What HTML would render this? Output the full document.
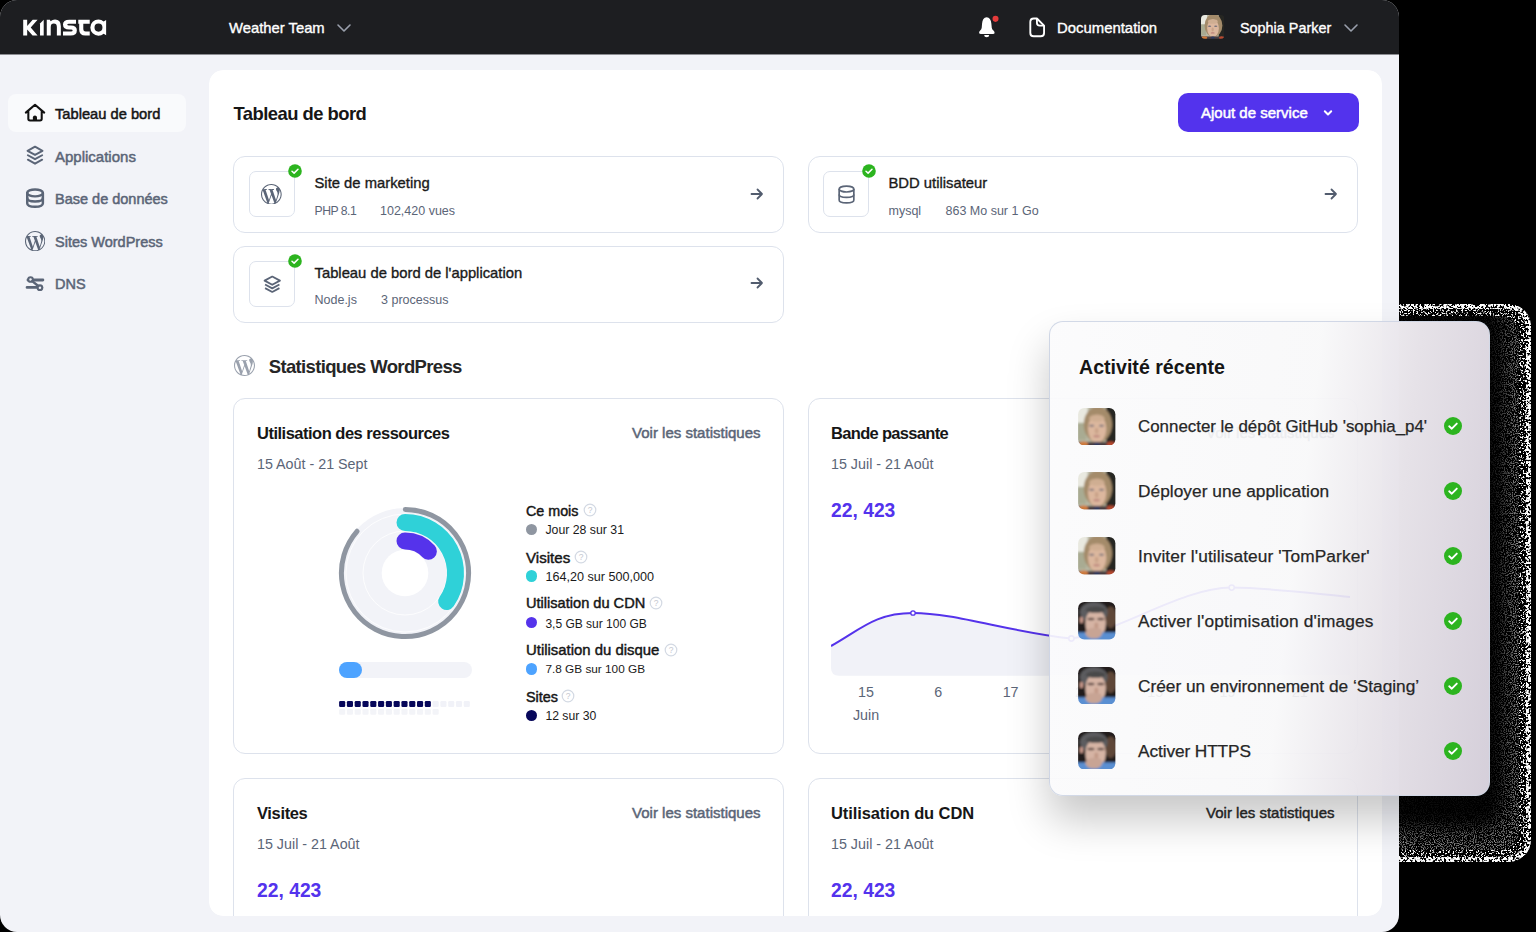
<!DOCTYPE html>
<html><head><meta charset="utf-8">
<style>
*{box-sizing:border-box;margin:0;padding:0}
html,body{width:1536px;height:932px;overflow:hidden;background:#000;font-family:"Liberation Sans",sans-serif}
.abs{position:absolute}
.t{position:absolute;line-height:1;white-space:nowrap}
.sb{-webkit-text-stroke:0.35px currentColor}
.frame{position:absolute;left:0;top:0;width:1399px;height:932px;border-radius:17px;background:#f2f3f8;overflow:hidden}
.header{position:absolute;left:0;top:0;width:1399px;height:54px;background:#1d1e21}
.panel{position:absolute;left:209px;top:70px;width:1173px;height:846px;background:#fff;border-radius:14px;overflow:hidden}
.card{position:absolute;border:1px solid #dde2ec;border-radius:12px;background:#fff}
.ibox{position:absolute;width:46px;height:46px;border:1px solid #dde2ec;border-radius:7px;background:#fff}
.badge{position:absolute;width:14px;height:14px;border-radius:50%;background:#2cb41f}
.nav{color:#5b6577}
</style></head>
<body>
<svg width="0" height="0" style="position:absolute">
<defs>
<filter id="bl" x="-10%" y="-10%" width="120%" height="120%"><feGaussianBlur stdDeviation="18"/></filter>
<clipPath id="avc"><rect x="85" y="100" width="725" height="730" rx="120"/></clipPath>
<symbol id="sophia" viewBox="85 100 725 730">
<g clip-path="url(#avc)"><g filter="url(#bl)">
<rect x="40" y="60" width="820" height="800" fill="#b9b8a4"/>
<rect x="40" y="60" width="230" height="330" fill="#e9e9e0"/>
<rect x="40" y="390" width="200" height="330" fill="#a9ab92"/>
<rect x="630" y="60" width="230" height="800" fill="#262622"/>
<ellipse cx="470" cy="420" rx="275" ry="350" fill="#a48b6a"/>
<ellipse cx="455" cy="505" rx="180" ry="275" fill="#dcb79e"/>
<ellipse cx="450" cy="300" rx="150" ry="70" fill="#cfae92"/>
<ellipse cx="350" cy="445" rx="50" ry="20" fill="#76707a"/>
<ellipse cx="540" cy="445" rx="50" ry="20" fill="#76707a"/>
<ellipse cx="445" cy="545" rx="35" ry="60" fill="#c9a288"/>
<ellipse cx="445" cy="650" rx="65" ry="20" fill="#b98078"/>
<rect x="40" y="760" width="820" height="100" fill="#4a3c40"/>
<ellipse cx="190" cy="800" rx="90" ry="50" fill="#d07a3a"/>
<ellipse cx="720" cy="800" rx="80" ry="50" fill="#b8482e"/>
<ellipse cx="450" cy="800" rx="60" ry="40" fill="#2d3a60"/>
</g></g>
</symbol>
<symbol id="man" viewBox="85 100 725 730">
<g clip-path="url(#avc)"><g filter="url(#bl)">
<rect x="40" y="60" width="820" height="800" fill="#211e1c"/>
<ellipse cx="720" cy="400" rx="110" ry="210" fill="#5e4638"/>
<ellipse cx="390" cy="300" rx="270" ry="200" fill="#5c5c5e"/>
<ellipse cx="425" cy="520" rx="200" ry="285" fill="#d6b4a4"/>
<ellipse cx="150" cy="450" rx="35" ry="65" fill="#c8988a"/>
<ellipse cx="425" cy="250" rx="190" ry="60" fill="#48484a"/>
<ellipse cx="335" cy="430" rx="70" ry="25" fill="#5e4a44"/>
<ellipse cx="525" cy="430" rx="70" ry="25" fill="#5e4a44"/>
<ellipse cx="440" cy="560" rx="40" ry="60" fill="#c29a88"/>
<ellipse cx="440" cy="645" rx="85" ry="25" fill="#9e7268"/>
<rect x="40" y="690" width="820" height="170" fill="#5a8fd2"/>
<ellipse cx="390" cy="705" rx="165" ry="105" fill="#c8a494"/>
</g></g>
</symbol>
</defs></svg>
<svg class="abs" style="left:1380px;top:290px" width="156" height="590" viewBox="1380 290 156 590">
<defs>
<filter id="nz1" x="1380" y="290" width="156" height="590" filterUnits="userSpaceOnUse">
<feTurbulence type="fractalNoise" baseFrequency="0.45" numOctaves="2" seed="3" result="t"/>
<feColorMatrix in="t" type="matrix" values="0 0 0 1 0  0 0 0 1 0  0 0 0 1 0  0 0 0 0 1"/>
<feComponentTransfer><feFuncR type="linear" slope="10" intercept="-4.3"/><feFuncG type="linear" slope="10" intercept="-4.3"/><feFuncB type="linear" slope="10" intercept="-4.3"/></feComponentTransfer>
</filter>
<filter id="nz1b" x="1380" y="290" width="156" height="590" filterUnits="userSpaceOnUse">
<feTurbulence type="fractalNoise" baseFrequency="0.6" numOctaves="2" seed="5" result="t"/>
<feColorMatrix in="t" type="matrix" values="0 0 0 1 0  0 0 0 1 0  0 0 0 1 0  0 0 0 0 1"/>
<feComponentTransfer><feFuncR type="linear" slope="8" intercept="-4.4"/><feFuncG type="linear" slope="8" intercept="-4.4"/><feFuncB type="linear" slope="8" intercept="-4.4"/></feComponentTransfer>
</filter>
<filter id="nz2" x="1380" y="290" width="156" height="590" filterUnits="userSpaceOnUse">
<feTurbulence type="fractalNoise" baseFrequency="0.9" numOctaves="2" seed="7" result="t"/>
<feColorMatrix in="t" type="matrix" values="0 0 0 1 0  0 0 0 1 0  0 0 0 1 0  0 0 0 0 1"/>
<feComponentTransfer><feFuncR type="linear" slope="1.1" intercept="-0.55"/><feFuncG type="linear" slope="1.1" intercept="-0.55"/><feFuncB type="linear" slope="1.1" intercept="-0.55"/></feComponentTransfer>
</filter>
<filter id="bl12" x="1200" y="200" width="400" height="700" filterUnits="userSpaceOnUse"><feGaussianBlur stdDeviation="9"/></filter>
<clipPath id="ring1"><path clip-rule="evenodd" d="M1300,304H1509.0A22.0,22.0 0 0,1 1531,326.0V840.0A22.0,22.0 0 0,1 1509.0,862H1300Z M1300,309H1505.5A20.5,20.5 0 0,1 1526,329.5V836.5A20.5,20.5 0 0,1 1505.5,857H1300Z"/></clipPath>
<clipPath id="ring2"><path clip-rule="evenodd" d="M1300,309H1505.5A20.5,20.5 0 0,1 1526,329.5V836.5A20.5,20.5 0 0,1 1505.5,857H1300Z M1300,316H1500.6A18.4,18.4 0 0,1 1519,334.4V831.6A18.4,18.4 0 0,1 1500.6,850H1300Z"/></clipPath>
<clipPath id="inner"><path d="M1300,316H1500.6A18.4,18.4 0 0,1 1519,334.4V831.6A18.4,18.4 0 0,1 1500.6,850H1300Z"/></clipPath>
</defs>
<rect x="1380" y="290" width="156" height="590" fill="#000"/>
<g clip-path="url(#ring1)"><rect x="1380" y="290" width="156" height="590" filter="url(#nz1)"/></g>
<g clip-path="url(#ring2)"><rect x="1380" y="290" width="156" height="590" filter="url(#nz1b)"/></g>
<g clip-path="url(#inner)"><rect x="1380" y="290" width="156" height="590" filter="url(#nz2)"/>
<rect x="1300" y="300" width="205" height="530" rx="24" fill="#000" opacity="0.9" filter="url(#bl12)"/>
</g>
</svg>
<div class="frame">
  <div class="abs" style="left:0;top:54px;width:1399px;height:1px;background:#8c8d92"></div>
  <div class="header">
    <svg class="abs" style="left:18px;top:12px" width="94" height="30" viewBox="0 0 1536 490">
      <g fill="#fff">
        <path d="M85,125H150V228L240,125H320L208,255L320,385H238L150,285V385H85Z"/>
        <path d="M360,188L420,125V385H360Z"/>
        <path d="M470,385V128H522L532,150Q562,122 605,122Q700,122 700,232V385H635V245Q635,188 585,188Q535,188 535,245V385Z"/>
        <path d="M948,125H838Q735,125 735,205Q735,287 838,287H868Q893,287 893,303Q893,320 868,320H735V385H862Q962,385 962,300Q962,222 862,222H832Q805,222 805,205Q805,190 832,190H948Z"/>
        <path d="M985,125H1172V192H1067V282Q1067,320 1105,320H1172V385H1100Q1000,385 1000,290V192H985Z"/>
        <path fill-rule="evenodd" d="M1315,122A132,132 0 1,0 1315,388A132,132 0 0,0 1400,355L1440,380V130L1400,155A132,132 0 0,0 1315,122ZM1315,188A65,67 0 1,1 1315,322A65,67 0 1,1 1315,188Z"/>
      </g>
    </svg>

    <div class="t sb" style="left:229px;top:21px;font-size:14.8px;color:#fff">Weather Team</div>
    <svg class="abs" style="left:336px;top:22px" width="16" height="12" viewBox="0 0 16 12"><path d="M2,3L8,9L14,3" fill="none" stroke="#9aa0ac" stroke-width="1.6" stroke-linecap="round" stroke-linejoin="round"/></svg>
    <svg class="abs" style="left:970px;top:10px" width="80" height="35" viewBox="0 0 1536 672">
      <path fill="#fff" d="M320,140Q240,150 232,260L225,340Q222,370 195,395Q170,420 175,440Q180,460 210,460H440Q470,460 472,440Q475,420 450,395Q420,370 418,340L410,260Q400,150 320,140Z"/>
      <path fill="#fff" d="M272,480H368Q368,525 320,525Q272,525 272,480Z"/>
      <circle cx="490" cy="170" r="58" fill="#e63b3b"/>
      <path fill="none" stroke="#fff" stroke-width="36" stroke-linejoin="round" d="M1225,163H1285L1422,300V440Q1422,505 1357,505H1222Q1158,505 1158,440V230Q1158,163 1225,163Z"/>
      <path fill="none" stroke="#fff" stroke-width="36" stroke-linejoin="round" d="M1285,163V245Q1285,300 1340,300H1422"/>
    </svg>
    <div class="t sb" style="left:1057px;top:21px;font-size:14.9px;color:#fff">Documentation</div>
    <svg class="abs" style="left:1200.5px;top:15.2px" width="23.5" height="23.8"><use href="#sophia"/></svg>
    <div class="t sb" style="left:1240px;top:21px;font-size:14.4px;color:#fff">Sophia Parker</div>
    <svg class="abs" style="left:1343px;top:22px" width="16" height="12" viewBox="0 0 16 12"><path d="M2,3L8,9L14,3" fill="none" stroke="#9aa0ac" stroke-width="1.6" stroke-linecap="round" stroke-linejoin="round"/></svg>
  </div>

  <div class="abs" style="left:8px;top:94px;width:178px;height:38px;border-radius:8px;background:#f9fafc"></div>
  <svg class="abs" style="left:20px;top:95px" width="40" height="80" viewBox="0 0 466 932">
    <path fill="none" stroke="#111" stroke-width="24" stroke-linejoin="round" stroke-linecap="round" d="M68,205L175,114L282,205M97,183V278Q97,298 117,298H233Q253,298 253,278V183"/>
    <path fill="#111" d="M150,298V262Q150,238 174,238Q198,238 198,262V298Z"/>
    <g fill="none" stroke="#5b6577" stroke-width="23" stroke-linejoin="round" stroke-linecap="round">
      <path d="M175,602L262,650L175,698L88,650Z"/>
      <path d="M92,702L175,748L258,702"/>
      <path d="M92,754L175,800L258,754"/>
    </g>
  </svg>
  <svg class="abs" style="left:20px;top:180px" width="40" height="120" viewBox="0 0 311 932">
    <g fill="none" stroke="#5b6577" stroke-width="19" stroke-linecap="round">
      <ellipse cx="117" cy="100" rx="61" ry="27"/>
      <path d="M56,100V180Q56,208 117,208Q178,208 178,180V100"/>
      <path d="M56,140Q56,167 117,167Q178,167 178,140"/>
      <path d="M62,777H178M55,835H170" stroke-width="22"/>
      <circle cx="82" cy="773" r="18" stroke-width="16" fill="#f2f3f8"/>
      <circle cx="155" cy="837" r="18" stroke-width="16" fill="#f2f3f8"/>
      <path d="M95,786L142,824" stroke-width="19"/>
    </g>
  </svg>
<svg class="abs" style="left:25px;top:230.5px" width="20.3" height="20.3" viewBox="0 0 24 24"><path fill="#5b6577" d="M21.469 6.825c.84 1.537 1.318 3.3 1.318 5.175 0 3.979-2.156 7.456-5.363 9.325l3.295-9.527c.615-1.54.82-2.771.82-3.864 0-.405-.026-.78-.07-1.11m-7.981.105c.647-.03 1.232-.105 1.232-.105.582-.075.514-.93-.067-.899 0 0-1.755.135-2.88.135-1.064 0-2.85-.15-2.85-.15-.585-.03-.661.855-.075.885 0 0 .54.061 1.125.09l1.68 4.605-2.37 7.08L5.354 6.9c.649-.03 1.234-.1 1.234-.1.585-.075.516-.93-.065-.896 0 0-1.746.138-2.874.138-.2 0-.438-.008-.69-.015C4.911 3.15 8.235 1.215 12 1.215c2.809 0 5.365 1.072 7.286 2.833-.046-.003-.091-.009-.141-.009-1.06 0-1.812.923-1.812 1.914 0 .89.513 1.643 1.06 2.531.411.72.89 1.643.89 2.977 0 .915-.354 1.994-.821 3.479l-1.075 3.585-3.9-11.61.001.014zM12 22.784c-1.059 0-2.081-.153-3.048-.437l3.237-9.406 3.315 9.087c.024.053.05.101.078.149-1.12.393-2.325.609-3.582.609M1.211 12c0-1.564.336-3.05.935-4.39L7.29 21.709C3.694 19.96 1.212 16.271 1.211 12M12 0C5.385 0 0 5.385 0 12s5.385 12 12 12 12-5.385 12-12S18.615 0 12 0"/></svg>
<div class="t sb" style="-webkit-text-stroke:0.5px currentColor;left:55px;top:106.5px;font-size:14.7px;color:#161616">Tableau de bord</div>
  <div class="t sb nav" style="-webkit-text-stroke:0.5px currentColor;left:55px;top:149px;font-size:15px">Applications</div>
  <div class="t sb nav" style="-webkit-text-stroke:0.5px currentColor;left:55px;top:192px;font-size:14.5px">Base de données</div>
  <div class="t sb nav" style="-webkit-text-stroke:0.5px currentColor;left:55px;top:234.5px;font-size:14.5px">Sites WordPress</div>
  <div class="t sb nav" style="-webkit-text-stroke:0.5px currentColor;left:55px;top:277px;font-size:14.5px">DNS</div>
<div class="pc" style="position:absolute;left:0;top:0;width:1399px;height:932px;clip-path:inset(70px 17px 16px 209px round 14px)">
<div class="panel"></div>
<div class="t" style="left:233.5px;top:104.72px;font-size:18.4px;color:#161616;font-weight:bold;letter-spacing:-0.53px">Tableau de bord</div>
<div class="abs" style="left:1177.5px;top:93.3px;width:181.5px;height:38.7px;border-radius:10px;background:#5333ed"></div>
<div class="t sb" style="left:1201px;top:104.80px;font-size:15px;color:#fff;-webkit-text-stroke:0.5px #fff">Ajout de service</div>
<svg class="abs" style="left:1321.5px;top:107px" width="12" height="12" viewBox="0 0 12 12"><path d="M2.8,4.3L6,7.5L9.2,4.3" fill="none" stroke="#fff" stroke-width="2" stroke-linecap="round" stroke-linejoin="round"/></svg>
<div class="card" style="left:233px;top:156px;width:551px;height:77px"></div>
<div class="ibox" style="left:248.5px;top:171px"></div>
<svg class="abs" style="left:261.3px;top:183.8px" width="20.7" height="20.7" viewBox="0 0 24 24"><path fill="#5b6577" d="M21.469 6.825c.84 1.537 1.318 3.3 1.318 5.175 0 3.979-2.156 7.456-5.363 9.325l3.295-9.527c.615-1.54.82-2.771.82-3.864 0-.405-.026-.78-.07-1.11m-7.981.105c.647-.03 1.232-.105 1.232-.105.582-.075.514-.93-.067-.899 0 0-1.755.135-2.88.135-1.064 0-2.85-.15-2.85-.15-.585-.03-.661.855-.075.885 0 0 .54.061 1.125.09l1.68 4.605-2.37 7.08L5.354 6.9c.649-.03 1.234-.1 1.234-.1.585-.075.516-.93-.065-.896 0 0-1.746.138-2.874.138-.2 0-.438-.008-.69-.015C4.911 3.15 8.235 1.215 12 1.215c2.809 0 5.365 1.072 7.286 2.833-.046-.003-.091-.009-.141-.009-1.06 0-1.812.923-1.812 1.914 0 .89.513 1.643 1.06 2.531.411.72.89 1.643.89 2.977 0 .915-.354 1.994-.821 3.479l-1.075 3.585-3.9-11.61.001.014zM12 22.784c-1.059 0-2.081-.153-3.048-.437l3.237-9.406 3.315 9.087c.024.053.05.101.078.149-1.12.393-2.325.609-3.582.609M1.211 12c0-1.564.336-3.05.935-4.39L7.29 21.709C3.694 19.96 1.212 16.271 1.211 12M12 0C5.385 0 0 5.385 0 12s5.385 12 12 12 12-5.385 12-12S18.615 0 12 0"/></svg>
<svg class="abs" style="left:288px;top:164px" width="14" height="14" viewBox="0 0 14 14"><circle cx="7" cy="7" r="6.8" fill="#2cb41f"/><path d="M4,7.2L6.1,9.1L10,5.2" fill="none" stroke="#fff" stroke-width="1.5" stroke-linecap="round" stroke-linejoin="round"/></svg>
<div class="t sb" style="left:314.5px;top:176.07px;font-size:14.8px;color:#1a1a1a;">Site de marketing</div>
<div class="t" style="left:314.5px;top:204.62px;font-size:12.2px;color:#5b6577;letter-spacing:-0.5px">PHP 8.1</div>
<div class="t" style="left:380px;top:204.62px;font-size:12.5px;color:#5b6577;">102,420 vues</div>
<svg class="abs" style="left:750.2px;top:186.8px" width="14" height="14" viewBox="0 0 14 14"><path d="M1.5,7H12M7.5,2.5L12,7L7.5,11.5" fill="none" stroke="#525c6e" stroke-width="1.8" stroke-linecap="round" stroke-linejoin="round"/></svg>
<div class="card" style="left:808px;top:156px;width:550px;height:77px"></div>
<div class="ibox" style="left:823px;top:171px"></div>
<svg class="abs" style="left:835.5px;top:184px" width="21" height="21" viewBox="0 0 20 20"><g fill="none" stroke="#5b6577" stroke-width="1.6"><ellipse cx="10" cy="4.8" rx="7" ry="2.8"/><path d="M3,4.8V15.2Q3,18 10,18Q17,18 17,15.2V4.8"/><path d="M3,10Q3,12.8 10,12.8Q17,12.8 17,10"/></g></svg>
<svg class="abs" style="left:862px;top:164px" width="14" height="14" viewBox="0 0 14 14"><circle cx="7" cy="7" r="6.8" fill="#2cb41f"/><path d="M4,7.2L6.1,9.1L10,5.2" fill="none" stroke="#fff" stroke-width="1.5" stroke-linecap="round" stroke-linejoin="round"/></svg>
<div class="t sb" style="left:888.5px;top:176.07px;font-size:14.8px;color:#1a1a1a;">BDD utilisateur</div>
<div class="t" style="left:888.5px;top:204.62px;font-size:12.5px;color:#5b6577;">mysql</div>
<div class="t" style="left:945.5px;top:204.62px;font-size:12.5px;color:#5b6577;">863 Mo sur 1 Go</div>
<svg class="abs" style="left:1324.2px;top:186.8px" width="14" height="14" viewBox="0 0 14 14"><path d="M1.5,7H12M7.5,2.5L12,7L7.5,11.5" fill="none" stroke="#525c6e" stroke-width="1.8" stroke-linecap="round" stroke-linejoin="round"/></svg>
<div class="card" style="left:233px;top:245.5px;width:551px;height:77px"></div>
<div class="ibox" style="left:248.5px;top:260.5px"></div>
<svg class="abs" style="left:261.5px;top:273.5px" width="20.5" height="20.5" viewBox="0 0 20 20"><g fill="none" stroke="#5b6577" stroke-width="1.75" stroke-linejoin="round"><path d="M10,2.5L17.5,6.5L10,10.5L2.5,6.5Z"/><path d="M3,10.3L10,14L17,10.3"/><path d="M3,13.8L10,17.5L17,13.8"/></g></svg>
<svg class="abs" style="left:288px;top:253.5px" width="14" height="14" viewBox="0 0 14 14"><circle cx="7" cy="7" r="6.8" fill="#2cb41f"/><path d="M4,7.2L6.1,9.1L10,5.2" fill="none" stroke="#fff" stroke-width="1.5" stroke-linecap="round" stroke-linejoin="round"/></svg>
<div class="t sb" style="left:314.5px;top:265.57px;font-size:14.8px;color:#1a1a1a;">Tableau de bord de l'application</div>
<div class="t" style="left:314.5px;top:294.12px;font-size:12.5px;color:#5b6577;">Node.js</div>
<div class="t" style="left:381px;top:294.12px;font-size:12.5px;color:#5b6577;">3 processus</div>
<svg class="abs" style="left:750.2px;top:276.3px" width="14" height="14" viewBox="0 0 14 14"><path d="M1.5,7H12M7.5,2.5L12,7L7.5,11.5" fill="none" stroke="#525c6e" stroke-width="1.8" stroke-linecap="round" stroke-linejoin="round"/></svg>
<svg class="abs" style="left:234.2px;top:355.2px" width="21" height="21" viewBox="0 0 24 24"><path fill="#9aa1ad" d="M21.469 6.825c.84 1.537 1.318 3.3 1.318 5.175 0 3.979-2.156 7.456-5.363 9.325l3.295-9.527c.615-1.54.82-2.771.82-3.864 0-.405-.026-.78-.07-1.11m-7.981.105c.647-.03 1.232-.105 1.232-.105.582-.075.514-.93-.067-.899 0 0-1.755.135-2.88.135-1.064 0-2.85-.15-2.85-.15-.585-.03-.661.855-.075.885 0 0 .54.061 1.125.09l1.68 4.605-2.37 7.08L5.354 6.9c.649-.03 1.234-.1 1.234-.1.585-.075.516-.93-.065-.896 0 0-1.746.138-2.874.138-.2 0-.438-.008-.69-.015C4.911 3.15 8.235 1.215 12 1.215c2.809 0 5.365 1.072 7.286 2.833-.046-.003-.091-.009-.141-.009-1.06 0-1.812.923-1.812 1.914 0 .89.513 1.643 1.06 2.531.411.72.89 1.643.89 2.977 0 .915-.354 1.994-.821 3.479l-1.075 3.585-3.9-11.61.001.014zM12 22.784c-1.059 0-2.081-.153-3.048-.437l3.237-9.406 3.315 9.087c.024.053.05.101.078.149-1.12.393-2.325.609-3.582.609M1.211 12c0-1.564.336-3.05.935-4.39L7.29 21.709C3.694 19.96 1.212 16.271 1.211 12M12 0C5.385 0 0 5.385 0 12s5.385 12 12 12 12-5.385 12-12S18.615 0 12 0"/></svg>
<div class="t" style="left:268.7px;top:358.14px;font-size:18.5px;color:#262626;font-weight:bold;letter-spacing:-0.65px">Statistiques WordPress</div>
<div class="card" style="left:233px;top:397.5px;width:551px;height:356px"></div>
<div class="t" style="left:257px;top:425.03px;font-size:16.5px;color:#161616;font-weight:bold;letter-spacing:-0.5px">Utilisation des ressources</div>
<div class="t sb" style="-webkit-text-stroke:0.5px currentColor;right:638.5px;top:425.30px;font-size:15px;color:#5b6577">Voir les statistiques</div>
<div class="t" style="left:257px;top:457.10px;font-size:14.3px;color:#5b6577;">15 Août - 21 Sept</div>
<div class="card" style="left:808px;top:397.5px;width:550px;height:356px"></div>
<div class="t" style="left:831px;top:424.53px;font-size:16.5px;color:#161616;font-weight:bold;letter-spacing:-0.68px">Bande passante</div>
<div class="t sb" style="-webkit-text-stroke:0.5px currentColor;right:64.5px;top:424.80px;font-size:15px;color:#5b6577">Voir les statistiques</div>
<div class="t" style="left:831px;top:456.60px;font-size:14.3px;color:#5b6577;">15 Juil - 21 Août</div>
<div class="t" style="left:831px;top:500.66px;font-size:19.3px;color:#5333ed;font-weight:bold">22, 423</div>
<div class="card" style="left:233px;top:777.5px;width:551px;height:300px"></div>
<div class="t" style="left:257px;top:804.53px;font-size:16.5px;color:#161616;font-weight:bold;letter-spacing:-0.35px">Visites</div>
<div class="t sb" style="-webkit-text-stroke:0.5px currentColor;right:638.5px;top:804.80px;font-size:15px;color:#5b6577">Voir les statistiques</div>
<div class="t" style="left:257px;top:836.60px;font-size:14.3px;color:#5b6577;">15 Juil - 21 Août</div>
<div class="t" style="left:257px;top:880.66px;font-size:19.3px;color:#5333ed;font-weight:bold">22, 423</div>
<div class="card" style="left:808px;top:777.5px;width:550px;height:300px"></div>
<div class="t" style="left:831px;top:804.53px;font-size:16.5px;color:#161616;font-weight:bold;letter-spacing:-0.1px">Utilisation du CDN</div>
<div class="t sb" style="right:64.5px;top:804.80px;font-size:15px;color:#2a2a2a;-webkit-text-stroke:0.45px #2a2a2a">Voir les statistiques</div>
<div class="t" style="left:831px;top:836.60px;font-size:14.3px;color:#5b6577;">15 Juil - 21 Août</div>
<div class="t" style="left:831px;top:880.66px;font-size:19.3px;color:#5333ed;font-weight:bold">22, 423</div>
<svg class="abs" style="left:335.4px;top:502.7px" width="140" height="140" viewBox="0 0 140 140">
<circle cx="70" cy="70" r="65" fill="#f2f3f8"/>
<circle cx="70" cy="70" r="59" fill="none" stroke="#fff" stroke-width="0.8"/>
<circle cx="70" cy="70" r="42" fill="none" stroke="#fff" stroke-width="0.8"/>
<circle cx="70" cy="70" r="23.3" fill="#fff"/>
<path d="M70.33,6.40A63.6,63.6 0 1,1 22.00,28.27" fill="none" stroke="#8f96a1" stroke-width="5" stroke-linecap="round"/>
<path d="M70.00,19.50A50.5,50.5 0 0,1 111.67,98.53" fill="none" stroke="#2fd1d8" stroke-width="17" stroke-linecap="round"/>
<path d="M70.00,38.00A32,32 0 0,1 93.40,48.18" fill="none" stroke="#5533eb" stroke-width="17" stroke-linecap="round"/>
</svg>
<div class="abs" style="left:339.1px;top:662.1px;width:132.6px;height:15.7px;border-radius:8px;background:#f2f3f8"></div>
<div class="abs" style="left:339.1px;top:662.1px;width:22.8px;height:15.7px;border-radius:8px;background:#4da3ff"></div>
<svg class="abs" style="left:339px;top:700px" width="135" height="16" viewBox="0 0 135 16"><rect x="0.10" y="1" width="6.1" height="6" rx="1.2" fill="#07075a"/><rect x="7.89" y="1" width="6.1" height="6" rx="1.2" fill="#07075a"/><rect x="15.68" y="1" width="6.1" height="6" rx="1.2" fill="#07075a"/><rect x="23.47" y="1" width="6.1" height="6" rx="1.2" fill="#07075a"/><rect x="31.26" y="1" width="6.1" height="6" rx="1.2" fill="#07075a"/><rect x="39.05" y="1" width="6.1" height="6" rx="1.2" fill="#07075a"/><rect x="46.84" y="1" width="6.1" height="6" rx="1.2" fill="#07075a"/><rect x="54.63" y="1" width="6.1" height="6" rx="1.2" fill="#07075a"/><rect x="62.42" y="1" width="6.1" height="6" rx="1.2" fill="#07075a"/><rect x="70.21" y="1" width="6.1" height="6" rx="1.2" fill="#07075a"/><rect x="78.00" y="1" width="6.1" height="6" rx="1.2" fill="#07075a"/><rect x="85.79" y="1" width="6.1" height="6" rx="1.2" fill="#07075a"/><rect x="93.58" y="1" width="6.1" height="6" rx="1.2" fill="#f1f2f8"/><rect x="101.37" y="1" width="6.1" height="6" rx="1.2" fill="#f1f2f8"/><rect x="109.16" y="1" width="6.1" height="6" rx="1.2" fill="#f1f2f8"/><rect x="116.95" y="1" width="6.1" height="6" rx="1.2" fill="#f1f2f8"/><rect x="124.74" y="1" width="6.1" height="6" rx="1.2" fill="#f1f2f8"/><rect x="0.10" y="9" width="6.1" height="5.7" rx="1.2" fill="#f3f4f8"/><rect x="7.89" y="9" width="6.1" height="5.7" rx="1.2" fill="#f3f4f8"/><rect x="15.68" y="9" width="6.1" height="5.7" rx="1.2" fill="#f3f4f8"/><rect x="23.47" y="9" width="6.1" height="5.7" rx="1.2" fill="#f3f4f8"/><rect x="31.26" y="9" width="6.1" height="5.7" rx="1.2" fill="#f3f4f8"/><rect x="39.05" y="9" width="6.1" height="5.7" rx="1.2" fill="#f3f4f8"/><rect x="46.84" y="9" width="6.1" height="5.7" rx="1.2" fill="#f3f4f8"/><rect x="54.63" y="9" width="6.1" height="5.7" rx="1.2" fill="#f3f4f8"/><rect x="62.42" y="9" width="6.1" height="5.7" rx="1.2" fill="#f3f4f8"/><rect x="70.21" y="9" width="6.1" height="5.7" rx="1.2" fill="#f3f4f8"/><rect x="78.00" y="9" width="6.1" height="5.7" rx="1.2" fill="#f3f4f8"/><rect x="85.79" y="9" width="6.1" height="5.7" rx="1.2" fill="#f3f4f8"/><rect x="93.58" y="9" width="6.1" height="5.7" rx="1.2" fill="#f3f4f8"/></svg>
<div class="t sb" style="-webkit-text-stroke:0.45px currentColor;left:526px;top:503.69px;font-size:14.3px;color:#161616;">Ce mois</div>
<svg class="abs" style="left:582.5px;top:503.29999999999995px" width="14" height="14" viewBox="0 0 14 14"><circle cx="7" cy="7" r="5.8" fill="none" stroke="#d3d9e3" stroke-width="1.2"/><text x="7" y="10" text-anchor="middle" font-family="Liberation Sans" font-size="8.5" fill="#c4c8d0">?</text></svg>
<div class="abs" style="left:525.8px;top:523.9px;width:11.2px;height:11.2px;border-radius:50%;background:#8f96a1"></div>
<div class="t" style="left:545.4px;top:524.39px;font-size:12.3px;color:#1a1a1a;">Jour 28 sur 31</div>
<div class="t sb" style="-webkit-text-stroke:0.45px currentColor;left:526px;top:549.52px;font-size:15.1px;color:#161616;">Visites</div>
<svg class="abs" style="left:574px;top:549.8px" width="14" height="14" viewBox="0 0 14 14"><circle cx="7" cy="7" r="5.8" fill="none" stroke="#d3d9e3" stroke-width="1.2"/><text x="7" y="10" text-anchor="middle" font-family="Liberation Sans" font-size="8.5" fill="#c4c8d0">?</text></svg>
<div class="abs" style="left:525.8px;top:570.4px;width:11.2px;height:11.2px;border-radius:50%;background:#2fd1d8"></div>
<div class="t" style="left:545.4px;top:570.64px;font-size:12.6px;color:#1a1a1a;">164,20 sur 500,000</div>
<div class="t sb" style="-webkit-text-stroke:0.45px currentColor;left:526px;top:596.44px;font-size:14.6px;color:#161616;">Utilisation du CDN</div>
<svg class="abs" style="left:649.2px;top:596.3px" width="14" height="14" viewBox="0 0 14 14"><circle cx="7" cy="7" r="5.8" fill="none" stroke="#d3d9e3" stroke-width="1.2"/><text x="7" y="10" text-anchor="middle" font-family="Liberation Sans" font-size="8.5" fill="#c4c8d0">?</text></svg>
<div class="abs" style="left:525.8px;top:616.9px;width:11.2px;height:11.2px;border-radius:50%;background:#5533eb"></div>
<div class="t" style="left:545.4px;top:617.64px;font-size:12.0px;color:#1a1a1a;">3,5 GB sur 100 GB</div>
<div class="t sb" style="-webkit-text-stroke:0.45px currentColor;left:526px;top:642.69px;font-size:14.9px;color:#161616;">Utilisation du disque</div>
<svg class="abs" style="left:663.6px;top:642.8px" width="14" height="14" viewBox="0 0 14 14"><circle cx="7" cy="7" r="5.8" fill="none" stroke="#d3d9e3" stroke-width="1.2"/><text x="7" y="10" text-anchor="middle" font-family="Liberation Sans" font-size="8.5" fill="#c4c8d0">?</text></svg>
<div class="abs" style="left:525.8px;top:663.4px;width:11.2px;height:11.2px;border-radius:50%;background:#4da3ff"></div>
<div class="t" style="left:545.4px;top:664.31px;font-size:11.8px;color:#1a1a1a;">7.8 GB sur 100 GB</div>
<div class="t sb" style="-webkit-text-stroke:0.45px currentColor;left:526px;top:689.61px;font-size:14.4px;color:#161616;">Sites</div>
<svg class="abs" style="left:561.4px;top:689.3px" width="14" height="14" viewBox="0 0 14 14"><circle cx="7" cy="7" r="5.8" fill="none" stroke="#d3d9e3" stroke-width="1.2"/><text x="7" y="10" text-anchor="middle" font-family="Liberation Sans" font-size="8.5" fill="#c4c8d0">?</text></svg>
<div class="abs" style="left:525.8px;top:709.9px;width:11.2px;height:11.2px;border-radius:50%;background:#07075a"></div>
<div class="t" style="left:545.4px;top:710.47px;font-size:12.2px;color:#1a1a1a;">12 sur 30</div>
<svg class="abs" style="left:831px;top:560px" width="520" height="120" viewBox="831 560 520 120">
<path d="M831,646C860,630 875,613 913,613C955,613 1010,632 1071,638.5C1120,632 1180,588 1231.7,587.6C1270,588 1300,592 1350,597V675.7H839Q831,675.7 831,667.7Z" fill="#f1f2f8"/>
<path d="M831,646C860,630 875,613 913,613C955,613 1010,632 1071,638.5C1120,632 1180,588 1231.7,587.6C1270,588 1300,592 1350,597" fill="none" stroke="#5533eb" stroke-width="2"/>
<circle cx="913" cy="613" r="2.2" fill="#fff" stroke="#5533eb" stroke-width="1.3"/>
<circle cx="1071.4" cy="638.5" r="2.6" fill="#fff" stroke="#5533eb" stroke-width="1.6"/>
<circle cx="1231.7" cy="587.6" r="2.6" fill="#fff" stroke="#5533eb" stroke-width="1.6"/>
</svg>
<div class="t" style="left:836.0px;width:60px;text-align:center;top:685.40px;font-size:14.3px;color:#5b6577">15</div>
<div class="t" style="left:908.3px;width:60px;text-align:center;top:685.40px;font-size:14.3px;color:#5b6577">6</div>
<div class="t" style="left:980.6px;width:60px;text-align:center;top:685.40px;font-size:14.3px;color:#5b6577">17</div>
<div class="t" style="left:1052.9px;width:60px;text-align:center;top:685.40px;font-size:14.3px;color:#5b6577">28</div>
<div class="t" style="left:1125.2px;width:60px;text-align:center;top:685.40px;font-size:14.3px;color:#5b6577">15</div>
<div class="t" style="left:1197.5px;width:60px;text-align:center;top:685.40px;font-size:14.3px;color:#5b6577">19</div>
<div class="t" style="left:1269.8px;width:60px;text-align:center;top:685.40px;font-size:14.3px;color:#5b6577">21</div>
<div class="t" style="left:836px;width:60px;text-align:center;top:708.40px;font-size:14.3px;color:#5b6577">Juin</div>
</div>
</div>
<div class="abs" style="left:1049px;top:321px;width:441px;height:475px;border-radius:14px;box-shadow:0 24px 42px rgba(0,0,0,0.22)"></div>
<div class="abs" style="left:1049px;top:321px;width:441px;height:475px;border-radius:14px;border:1px solid rgba(205,213,228,0.9);background:linear-gradient(97deg,#fbfbfc 0%,#f8f8f9 55%,#e6e2e8 75%,#d5cfda 100%);clip-path:inset(0 0 0 350px)"></div>
<div class="abs" style="left:1049px;top:321px;width:441px;height:475px;border-radius:14px;border:1px solid rgba(205,213,228,0.9);background:linear-gradient(97deg,rgba(251,251,252,.92) 0%,rgba(248,248,249,.92) 55%,rgba(230,226,232,.92) 75%,rgba(213,207,218,.92) 100%);clip-path:inset(0 91px 0 0)"></div>
<div class="t" style="left:1079px;top:358.21px;font-size:19.6px;color:#161616;font-weight:bold">Activité récente</div>
<svg class="abs" style="left:1078.3px;top:407.55px" width="37.5" height="37.5"><use href="#sophia"/></svg>
<div class="t" style="left:1138px;top:418.69px;font-size:16.9px;color:#262626;-webkit-text-stroke:0.25px #262626;">Connecter le dépôt GitHub 'sophia_p4'</div>
<svg class="abs" style="left:1444.3px;top:417.30px" width="18" height="18" viewBox="0 0 18 18"><circle cx="9" cy="9" r="9" fill="#2cb41f"/><path d="M5.2,9.3L7.8,11.7L12.8,6.6" fill="none" stroke="#fff" stroke-width="1.9" stroke-linecap="round" stroke-linejoin="round"/></svg>
<svg class="abs" style="left:1078.3px;top:472.40px" width="37.5" height="37.5"><use href="#sophia"/></svg>
<div class="t" style="left:1138px;top:483.20px;font-size:17.3px;letter-spacing:0.042px;color:#262626;-webkit-text-stroke:0.25px #262626;">Déployer une application</div>
<svg class="abs" style="left:1444.3px;top:482.15px" width="18" height="18" viewBox="0 0 18 18"><circle cx="9" cy="9" r="9" fill="#2cb41f"/><path d="M5.2,9.3L7.8,11.7L12.8,6.6" fill="none" stroke="#fff" stroke-width="1.9" stroke-linecap="round" stroke-linejoin="round"/></svg>
<svg class="abs" style="left:1078.3px;top:537.25px" width="37.5" height="37.5"><use href="#sophia"/></svg>
<div class="t" style="left:1138px;top:548.05px;font-size:17.3px;letter-spacing:0.115px;color:#262626;-webkit-text-stroke:0.25px #262626;">Inviter l'utilisateur 'TomParker'</div>
<svg class="abs" style="left:1444.3px;top:547.00px" width="18" height="18" viewBox="0 0 18 18"><circle cx="9" cy="9" r="9" fill="#2cb41f"/><path d="M5.2,9.3L7.8,11.7L12.8,6.6" fill="none" stroke="#fff" stroke-width="1.9" stroke-linecap="round" stroke-linejoin="round"/></svg>
<svg class="abs" style="left:1078.3px;top:602.10px" width="37.5" height="37.5"><use href="#man"/></svg>
<div class="t" style="left:1138px;top:612.90px;font-size:17.3px;letter-spacing:0.171px;color:#262626;-webkit-text-stroke:0.25px #262626;">Activer l'optimisation d'images</div>
<svg class="abs" style="left:1444.3px;top:611.85px" width="18" height="18" viewBox="0 0 18 18"><circle cx="9" cy="9" r="9" fill="#2cb41f"/><path d="M5.2,9.3L7.8,11.7L12.8,6.6" fill="none" stroke="#fff" stroke-width="1.9" stroke-linecap="round" stroke-linejoin="round"/></svg>
<svg class="abs" style="left:1078.3px;top:666.95px" width="37.5" height="37.5"><use href="#man"/></svg>
<div class="t" style="left:1138px;top:677.75px;font-size:17.3px;letter-spacing:-0.011px;color:#262626;-webkit-text-stroke:0.25px #262626;">Créer un environnement de ‘Staging’</div>
<svg class="abs" style="left:1444.3px;top:676.70px" width="18" height="18" viewBox="0 0 18 18"><circle cx="9" cy="9" r="9" fill="#2cb41f"/><path d="M5.2,9.3L7.8,11.7L12.8,6.6" fill="none" stroke="#fff" stroke-width="1.9" stroke-linecap="round" stroke-linejoin="round"/></svg>
<svg class="abs" style="left:1078.3px;top:731.80px" width="37.5" height="37.5"><use href="#man"/></svg>
<div class="t" style="left:1138px;top:742.60px;font-size:17.3px;letter-spacing:-0.106px;color:#262626;-webkit-text-stroke:0.25px #262626;">Activer HTTPS</div>
<svg class="abs" style="left:1444.3px;top:741.55px" width="18" height="18" viewBox="0 0 18 18"><circle cx="9" cy="9" r="9" fill="#2cb41f"/><path d="M5.2,9.3L7.8,11.7L12.8,6.6" fill="none" stroke="#fff" stroke-width="1.9" stroke-linecap="round" stroke-linejoin="round"/></svg>
</body></html>
